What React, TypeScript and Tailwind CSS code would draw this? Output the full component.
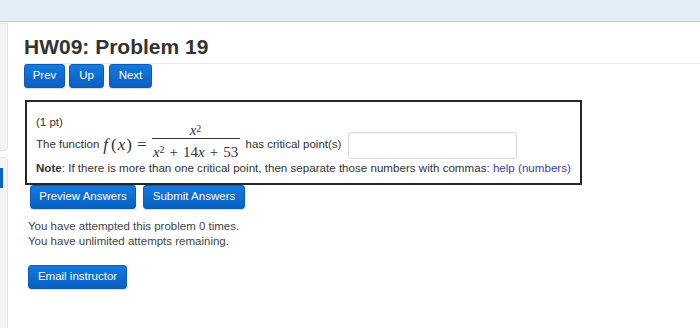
import React from "react";

const btn =
  "h-[24px] flex items-center justify-center rounded-[3px] text-white text-[11.5px] bg-gradient-to-b from-[#1579dd] to-[#0a5fc2] border border-[#0a5bb8] shadow-[0_1px_1px_rgba(0,0,0,0.15)]";

const serif = { fontFamily: '"Liberation Serif", "Times New Roman", serif' };

export default function App() {
  return (
    <div
      className="w-[700px] h-[328px] overflow-hidden bg-white text-[#333]"
      style={{ fontFamily: '"Liberation Sans", Arial, sans-serif' }}
    >
      <div className="h-[22px] bg-[#e3edf8] border-b border-[#c3c7cb]" />
      <div className="flex h-[306px]">
        <div className="w-[8px] flex flex-col">
          <div className="mt-[1px] h-[128px] bg-[#f4f4f4] border border-l-0 border-[#e4e4e4] rounded-br-[4px]" />
          <div className="mt-[6px] flex-1 bg-[#f4f4f4] border-t border-r border-[#e4e4e4] rounded-tr-[4px] relative">
            <div className="absolute left-0 top-[10px] w-[3px] h-[20px] bg-[#0b63c8]" />
          </div>
        </div>
        <div className="flex-1 pl-[16px] pt-[13px]">
          <div className="h-[24px] leading-[24px] text-[21px] font-bold text-[#333] whitespace-nowrap">
            HW09: Problem 19
          </div>
          <div className="mt-[4px] h-[1px] bg-[#e6e6e6]" />
          <div className="flex gap-[4px]">
            <div className={btn + " w-[41px]"}>Prev</div>
            <div className={btn + " w-[35px]"}>Up</div>
            <div className={btn + " w-[43px] ml-[1px]"}>Next</div>
          </div>
          <div className="mt-[12px] ml-[1px] w-[557px] h-[85px] border-2 border-[#262626] pl-[9px] pt-[13px] text-[11.5px] text-[#333]">
            <div className="h-[14px] leading-[14px]">(1 pt)</div>
            <div className="h-[32px] flex items-center whitespace-nowrap">
              <span>The function</span>
              <span className="ml-[4px] flex items-center" style={serif}>
                <span className="text-[17px] flex items-center">
                  <i>f</i>
                  <span className="ml-[3px]">(</span>
                  <i className="ml-[1px]">x</i>
                  <span className="ml-[1px]">)</span>
                  <span className="mx-[5px]">=</span>
                </span>
                <span className="text-[15px] flex flex-col items-center w-[88px] mb-[6px]">
                  <span className="h-[13px] leading-[13px] flex items-end">
                    <i className="leading-[13px]">x</i>
                    <span className="text-[10px] leading-[10px] self-start">2</span>
                  </span>
                  <span className="mt-[1px] w-full h-[1px] bg-[#333]" />
                  <span className="h-[21px] pt-[6px] leading-[15px] flex items-start">
                    <i>x</i>
                    <span className="text-[10px] leading-[10px]">2</span>
                    <span className="mx-[5px]">+</span>
                    <span>14</span>
                    <i>x</i>
                    <span className="mx-[5px]">+</span>
                    <span>53</span>
                  </span>
                </span>
              </span>
              <span className="ml-[6px]">has critical point(s)</span>
              <div className="ml-[7px] w-[169px] h-[27px] border border-[#d8d8d8] rounded-[3px] bg-white shadow-[inset_0_1px_1px_rgba(0,0,0,0.05)]" />
            </div>
            <div className="h-[14px] leading-[14px] whitespace-nowrap text-[11.6px]">
              <b>Note</b>: If there is more than one critical point, then separate those numbers with commas:{" "}
              <span className="text-[#3b3ea8]">help (numbers)</span>
            </div>
          </div>
          <div className="flex gap-[7px] ml-[6px]">
            <div className={btn + " w-[106px]"}>Preview Answers</div>
            <div className={btn + " w-[102px]"}>Submit Answers</div>
          </div>
          <div className="mt-[10px] ml-[4px] text-[11.5px] leading-[15px] text-[#444]">
            <div>You have attempted this problem 0 times.</div>
            <div>You have unlimited attempts remaining.</div>
          </div>
          <div className="mt-[16px] ml-[4px] flex">
            <div className={btn + " w-[99px]"}>Email instructor</div>
          </div>
        </div>
      </div>
    </div>
  );
}
